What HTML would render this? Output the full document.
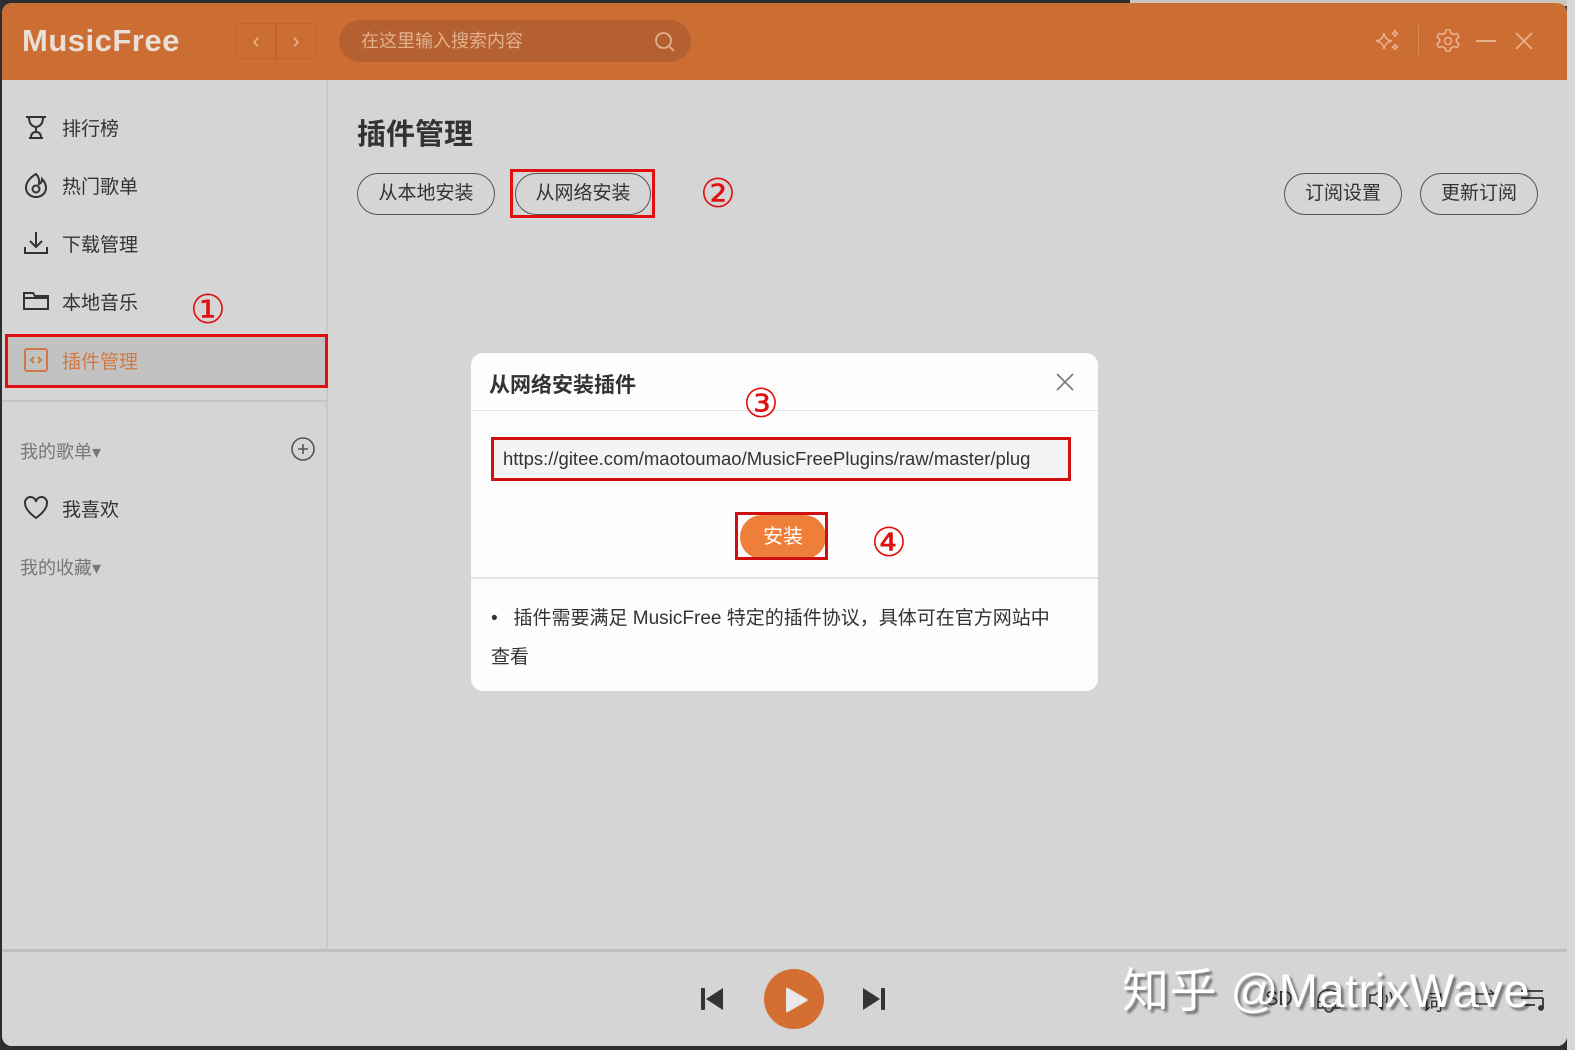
<!DOCTYPE html>
<html><head><meta charset="utf-8"><style>
*{margin:0;padding:0;box-sizing:border-box}
body{width:1575px;height:1050px;background:#2e2e2e;position:relative;overflow:hidden;font-family:"Liberation Sans","Noto Sans CJK SC",sans-serif}
.abs{position:absolute}
#topr{left:1130px;top:0;width:445px;height:6px;background:#c9c6c0}
#rightstrip{left:1567px;top:0;width:8px;height:1050px;background:#d8d8d8}
#win{left:2px;top:3px;width:1565px;height:1043px;background:#d5d5d5;border-radius:10px;overflow:hidden}
#hdr{left:0;top:0;width:1565px;height:77px;background:#cc6d34}
.logo{left:20px;top:20px;font-size:31px;font-weight:bold;color:#eadfd6;letter-spacing:0.5px}
.nav{top:20px;width:40px;height:36px;border:1px solid #c0632c;color:#e8b48e;font-size:22px;text-align:center;line-height:34px}
.search{left:337px;top:17px;width:352px;height:42px;border-radius:21px;background:#b56030;color:#e2b08e;font-size:18px;line-height:42px;padding-left:22px}
.side{left:0;top:77px;width:326px;height:869px;background:#d5d5d5;border-right:2px solid #c8c8c8}
.item{left:20px;font-size:19px;color:#333;display:flex;align-items:center}
.item svg{margin-right:12px}
.sel{left:3px;top:254px;width:323px;height:54px;background:#c2c2c2;border:3px solid #e01010}
.circ{color:#e01010;font-size:40px;font-family:"DejaVu Sans",sans-serif}
.title{left:355px;top:108px;font-size:29px;font-weight:bold;color:#333}
.btn{height:42px;border:1.5px solid #555;border-radius:21px;font-size:19px;color:#333;text-align:center;line-height:39px}
#foot{left:0;top:946px;width:1565px;height:97px;background:#d5d5d5;border-top:3px solid #bfbfbf}
#dlg{left:469px;top:350px;width:627px;height:338px;background:#fdfdfd;border-radius:12px}
</style></head><body>
<div id="topr" class="abs"></div>
<div id="rightstrip" class="abs"></div>
<div id="win" class="abs">
 <div id="hdr" class="abs">
  <div class="abs logo">MusicFree</div>
  <div class="abs nav" style="left:234px">‹</div>
  <div class="abs nav" style="left:274px">›</div>
  <div class="abs search">在这里输入搜索内容
   <svg class="abs" style="left:315px;top:11px" width="22" height="22" viewBox="0 0 22 22" fill="none" stroke="#e2b08e" stroke-width="1.8"><circle cx="9.5" cy="9.5" r="7.5"/><path d="M15 15l5 5"/></svg></div>
  <svg class="abs" style="left:1372px;top:24px" width="30" height="30" viewBox="0 0 30 30" fill="none" stroke="#eab08a" stroke-width="1.6"><path d="M10 6q1 7 8 8q-7 1-8 8q-1-7-8-8q7-1 8-8z"/><path d="M21 3q.5 3 3 3.5q-2.5.5-3 3.5q-.5-3-3-3.5q2.5-.5 3-3.5z"/><path d="M21 17q.5 2.5 3 3q-2.5.5-3 3q-.5-2.5-3-3q2.5-.5 3-3z"/></svg>
  <div class="abs" style="left:1416px;top:22px;width:1px;height:30px;background:#d88a5a"></div>
  <svg class="abs" style="left:1432px;top:24px" width="28" height="28" viewBox="0 0 28 28" fill="none" stroke="#eab08a" stroke-width="1.6"><path d="M12 3h4l1 3 3 1.5 3-1 2 3.5-2.5 2v3l2.5 2-2 3.5-3-1-3 1.5-1 3h-4l-1-3-3-1.5-3 1-2-3.5 2.5-2v-3l-2.5-2 2-3.5 3 1 3-1.5z"/><circle cx="14" cy="14" r="3.5"/></svg>
  <div class="abs" style="left:1474px;top:37px;width:20px;height:2px;background:#eab08a"></div>
  <svg class="abs" style="left:1512px;top:28px" width="20" height="20" viewBox="0 0 20 20" stroke="#eab08a" stroke-width="1.8"><path d="M2 2l16 16M18 2L2 18"/></svg>
 </div>
 <div class="abs side">
  <div class="abs item" style="top:33px"><svg width="28" height="28" viewBox="0 0 28 28" fill="none" stroke="#333" stroke-width="2"><path d="M4 4h20M7 4q0 9 7 10q7-1 7-10M14 14v5M7 25h14M9 25q0-6 5-6t5 6"/></svg>排行榜</div>
  <div class="abs item" style="top:91px"><svg width="28" height="28" viewBox="0 0 28 28" fill="none" stroke="#333" stroke-width="2"><path d="M14 3q-10 6-10 14a10 9 0 0 0 20 0q0-5-4-9q0 4-3 5q1-6-3-10z"/><circle cx="14" cy="18" r="3.5"/></svg>热门歌单</div>
  <div class="abs item" style="top:149px"><svg width="28" height="28" viewBox="0 0 28 28" fill="none" stroke="#333" stroke-width="2"><path d="M14 3v15M8 12l6 6 6-6M3 18v6h22v-6"/></svg>下载管理</div>
  <div class="abs item" style="top:207px"><svg width="28" height="28" viewBox="0 0 28 28" fill="none" stroke="#333" stroke-width="2"><path d="M2 6h9l2 3h13v13H2z M2 11h24"/></svg>本地音乐</div>
  <div class="abs sel"></div>
  <div class="abs item" style="top:266px;color:#cf7a45"><svg width="28" height="28" viewBox="0 0 28 28" fill="none" stroke="#cf7a45" stroke-width="2"><rect x="3" y="3" width="22" height="22" rx="2"/><path d="M12 11l-3 3 3 3M16 11l3 3-3 3"/></svg>插件管理</div>
  <div class="abs circ" style="left:188px;top:207px">①</div>
  <div class="abs" style="left:0;top:320px;width:326px;height:2px;background:#c4c4c4"></div>
  <div class="abs" style="left:18px;top:358px;font-size:18px;color:#777">我的歌单▾</div>
  <svg class="abs" style="left:288px;top:356px" width="26" height="26" viewBox="0 0 26 26" fill="none" stroke="#555" stroke-width="1.6"><circle cx="13" cy="13" r="11"/><path d="M13 8v10M8 13h10"/></svg>
  <div class="abs item" style="top:414px"><svg width="28" height="28" viewBox="0 0 28 28" fill="none" stroke="#333" stroke-width="2"><path d="M14 24Q3 16 3 9a5.5 5.5 0 0 1 11-1a5.5 5.5 0 0 1 11 1q0 7-11 15z"/></svg>我喜欢</div>
  <div class="abs" style="left:18px;top:474px;font-size:18px;color:#777">我的收藏▾</div>
 </div>
 <div class="abs title">插件管理</div>
 <div class="abs btn" style="left:355px;top:170px;width:138px">从本地安装</div>
 <div class="abs btn" style="left:513px;top:170px;width:136px">从网络安装</div>
 <div class="abs" style="left:508px;top:166px;width:145px;height:49px;border:3px solid #e01010"></div>
 <div class="abs circ" style="left:698px;top:168px">②</div>
 <div class="abs btn" style="left:1282px;top:170px;width:118px">订阅设置</div>
 <div class="abs btn" style="left:1418px;top:170px;width:118px">更新订阅</div>
 <div id="dlg" class="abs">
  <div class="abs" style="left:18px;top:16px;font-size:21px;font-weight:bold;color:#333">从网络安装插件</div>
  <svg class="abs" style="left:585px;top:20px" width="18" height="18" viewBox="0 0 18 18" stroke="#777" stroke-width="1.6"><path d="M1 1l16 16M17 1L1 17"/></svg>
  <div class="abs" style="left:0;top:57px;width:627px;height:1px;background:#e3e3e3"></div>
  <div class="abs circ" style="left:272px;top:28px">③</div>
  <div class="abs" style="left:20px;top:84px;width:580px;height:44px;border:3px solid #d01010;background:#f4f4f4;font-size:18.5px;color:#333;line-height:38px;padding-left:9px;white-space:nowrap;overflow:hidden">https://gitee.com/maotoumao/MusicFreePlugins/raw/master/plug</div>
  <div class="abs" style="left:269px;top:162px;width:86px;height:44px;border-radius:22px;background:#ef7f38;color:#fff;font-size:20px;text-align:center;line-height:44px">安装</div>
  <div class="abs" style="left:264px;top:159px;width:93px;height:48px;border:3px solid #d01010"></div>
  <div class="abs circ" style="left:400px;top:167px">④</div>
  <div class="abs" style="left:0;top:224px;width:627px;height:2px;background:#e3e3e3"></div>
  <div class="abs" style="left:20px;top:246px;width:582px;font-size:19px;color:#333;line-height:39px">•&nbsp;&nbsp;&nbsp;插件需要满足 MusicFree 特定的插件协议，具体可在官方网站中<br>查看</div>
 </div>
 <div id="foot" class="abs">
  <svg class="abs" style="left:697px;top:34px" width="28" height="26" viewBox="0 0 28 26" fill="#333"><rect x="2" y="2" width="4" height="22" rx="1"/><path d="M24 2v22L7 13z"/></svg>
  <div class="abs" style="left:762px;top:17px;width:60px;height:60px;border-radius:30px;background:#d46e32"></div>
  <svg class="abs" style="left:780px;top:34px" width="28" height="28" viewBox="0 0 28 28" fill="#e8e8e8"><path d="M4 3q0-2 2-1l19 11q1.5 1 0 2L6 26q-2 1-2-1z"/></svg>
  <svg class="abs" style="left:857px;top:34px" width="28" height="26" viewBox="0 0 28 26" fill="#333"><rect x="22" y="2" width="4" height="22" rx="1"/><path d="M4 2v22L21 13z"/></svg>
  <div class="abs" style="left:1263px;top:36px;font-size:20px;color:#333">SD</div>
  <svg class="abs" style="left:1312px;top:32px" width="30" height="30" viewBox="0 0 30 30" fill="none" stroke="#333" stroke-width="1.6"><path d="M4 18q0-12 11-12t11 12M4 18h5v6H4zM21 18h5v6h-5z"/><circle cx="15" cy="24" r="4"/></svg>
  <svg class="abs" style="left:1365px;top:32px" width="30" height="30" viewBox="0 0 30 30" fill="none" stroke="#333" stroke-width="1.6"><path d="M3 11h5l7-6v20l-7-6H3zM19 11q2 4 0 8M23 8q4 7 0 14"/></svg>
  <div class="abs" style="left:1420px;top:35px;font-size:21px;color:#333">词</div>
  <svg class="abs" style="left:1466px;top:34px" width="30" height="26" viewBox="0 0 30 26" fill="none" stroke="#333" stroke-width="1.6"><path d="M4 12V8h22l-4-4M26 14v4H4l4 4"/></svg>
  <svg class="abs" style="left:1516px;top:34px" width="30" height="26" viewBox="0 0 30 26" fill="none" stroke="#333" stroke-width="1.8"><path d="M3 5h22M3 12h22M3 19h14M25 12v10"/><circle cx="23" cy="22" r="2" fill="#333"/></svg>
  <div class="abs" style="left:1120px;top:0px;font-size:47px;letter-spacing:0.5px;color:#fff;white-space:nowrap;text-shadow:3px 3px 2px rgba(0,0,0,0.45)">知乎 @MatrixWave</div>
 </div>
</div>
</body></html>
